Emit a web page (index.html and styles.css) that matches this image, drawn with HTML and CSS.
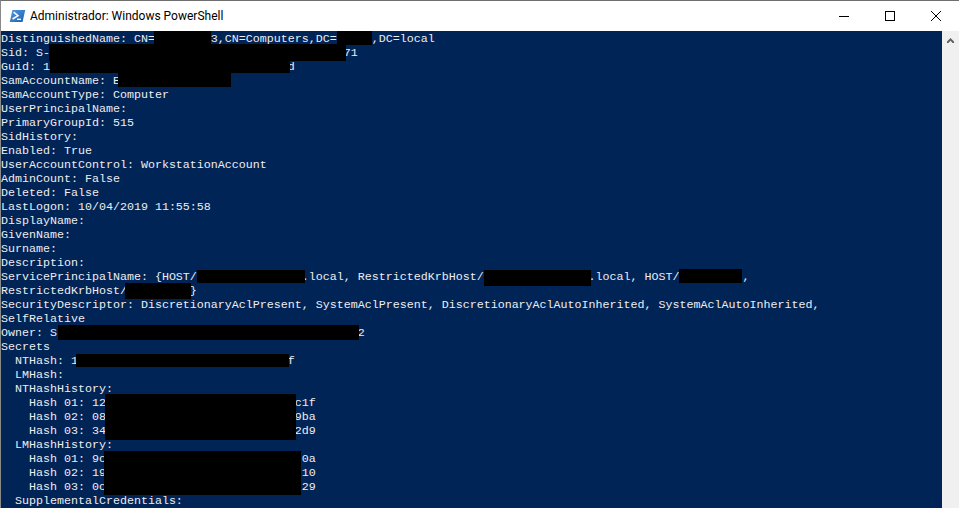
FILE: index.html
```html
<!DOCTYPE html>
<html lang="es">
<head>
<meta charset="utf-8">
<title>Administrador: Windows PowerShell</title>
<link rel="stylesheet" href="styles.css">
</head>
<body>
<div class="window">
  <header class="titlebar">
    <svg class="app-icon" width="17" height="14" viewBox="0 0 17 14" aria-hidden="true">
      <defs><linearGradient id="psg" x1="0" y1="0" x2="1" y2="1"><stop offset="0" stop-color="#4d9be0"/><stop offset="1" stop-color="#1f5fae"/></linearGradient></defs>
      <path d="M3.4 1H16.2L13.6 13H.8Z" fill="url(#psg)"/>
      <path d="M4.6 3.2L9 6.6L3.6 10" fill="none" stroke="#fff" stroke-width="1.5"/>
      <path d="M8 10.3H12" stroke="#fff" stroke-width="1.3"/>
    </svg>
    <span class="title">Administrador: Windows PowerShell</span>
    <div class="controls">
      <span class="control"><svg width="10" height="10" viewBox="0 0 10 10"><path d="M0 5.5H10" stroke="#000"/></svg></span>
      <span class="control"><svg width="10" height="10" viewBox="0 0 10 10"><rect x=".5" y=".5" width="9" height="9" fill="none" stroke="#000"/></svg></span>
      <span class="control"><svg width="10" height="10" viewBox="0 0 10 10"><path d="M0 0L10 10M10 0L0 10" stroke="#000" stroke-width="1"/></svg></span>
    </div>
  </header>
  <div class="console">
    <div class="buffer">
<pre class="output">DistinguishedName: CN=        3,CN=Computers,DC=     ,DC=local
Sid: S-                                          71
Guid: 1                                  d
SamAccountName: E
SamAccountType: Computer
UserPrincipalName:
PrimaryGroupId: 515
SidHistory:
Enabled: True
UserAccountControl: WorkstationAccount
AdminCount: False
Deleted: False
LastLogon: 10/04/2019 11:55:58
DisplayName:
GivenName:
Surname:
Description:
ServicePrincipalName: {HOST/               .local, RestrictedKrbHost/               .local, HOST/         ,
RestrictedKrbHost/         }
SecurityDescriptor: DiscretionaryAclPresent, SystemAclPresent, DiscretionaryAclAutoInherited, SystemAclAutoInherited,
SelfRelative
Owner: S                                           2
Secrets
  NTHash: 1                              f
  LMHash:
  NTHashHistory:
    Hash 01: 12                           c1f
    Hash 02: 08                           9ba
    Hash 03: 34                           2d9
  LMHashHistory:
    Hash 01: 9c                            0a
    Hash 02: 19                            10
    Hash 03: 0c                            29
  SupplementalCredentials:</pre>
      <i class="redact r-cn"></i>
      <i class="redact r-dc"></i>
      <i class="redact r-sid"></i>
      <i class="redact r-guid"></i>
      <i class="redact r-sam"></i>
      <i class="redact r-host1"></i>
      <i class="redact r-krb1"></i>
      <i class="redact r-host2"></i>
      <i class="redact r-krb2"></i>
      <i class="redact r-owner"></i>
      <i class="redact r-nt"></i>
      <i class="redact r-nthist"></i>
      <i class="redact r-lmhist"></i>
    </div>
    <aside class="scrollbar">
      <svg width="7" height="5" viewBox="0 0 7 5" aria-hidden="true"><path d="M0 5V3.5L3.5 0L7 3.5V5H5.6L3.5 2.7L1.4 5Z" fill="#606060"/></svg>
    </aside>
  </div>
</div>
</body>
</html>
```
FILE: styles.css
```css
html, body {
  margin: 0;
  padding: 0;
  overflow: hidden;
}
.window {
  width: 959px;
  height: 508px;
  box-sizing: border-box;
  display: flex;
  flex-direction: column;
  border-top: 1px solid #6f6f6f;
  border-left: 1px solid #8a8a8a;
  background: #fff;
  overflow: hidden;
}
.titlebar {
  height: 30px;
  flex: none;
  display: flex;
  align-items: center;
  padding-left: 8px;
  background: #fff;
}
.app-icon {
  flex: none;
  margin-top: -1px;
}
.title {
  margin-left: 4px;
  margin-top: -1px;
  font: 12px Roboto, "Open Sans", sans-serif;
  color: #000;
  white-space: nowrap;
}
.controls {
  margin-left: auto;
  display: flex;
  align-self: stretch;
}
.control {
  width: 46px;
  display: flex;
  align-items: center;
  justify-content: center;
}
.console {
  flex: 1;
  display: flex;
  min-height: 0;
}
.buffer {
  position: relative;
  flex: 1;
  background: #012456;
  overflow: hidden;
}
.output {
  margin: 0;
  padding-top: 1px;
  font: 11.666px/14px "Liberation Mono", monospace;
  color: #eeedf0;
}
.scrollbar {
  width: 17px;
  flex: none;
  background: #f0f0f0;
  display: flex;
  justify-content: center;
  align-items: flex-start;
  padding-top: 7px;
  box-sizing: border-box;
}
.redact {
  position: absolute;
  background: #000;
}
.r-cn { left: 153px; top: -1px; width: 57px; height: 15px; }
.r-dc { left: 336px; top: -1px; width: 35px; height: 15px; }
.r-sid { left: 48px; top: 13px; width: 297px; height: 17px; }
.r-guid { left: 49px; top: 29px; width: 240px; height: 13px; }
.r-sam { left: 117px; top: 42px; width: 113px; height: 14px; }
.r-host1 { left: 196px; top: 239px; width: 108px; height: 13px; }
.r-krb1 { left: 483px; top: 239px; width: 107px; height: 16px; }
.r-host2 { left: 678px; top: 238px; width: 63px; height: 14px; }
.r-krb2 { left: 124px; top: 252px; width: 66px; height: 16px; }
.r-owner { left: 57px; top: 294px; width: 301px; height: 15px; }
.r-nt { left: 75px; top: 323px; width: 213px; height: 13px; }
.r-nthist { left: 104px; top: 363px; width: 191px; height: 46px; }
.r-lmhist { left: 103px; top: 420px; width: 197px; height: 44px; }
```
